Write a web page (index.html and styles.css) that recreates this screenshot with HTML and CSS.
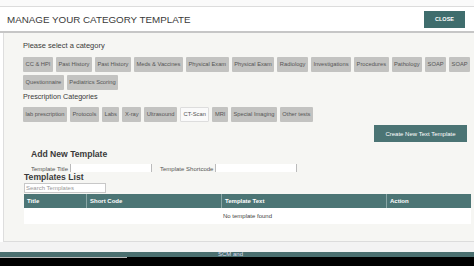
FILE: index.html
```html
<!DOCTYPE html>
<html lang="en">

<head>
    <meta charset="UTF-8">
    <meta name="viewport" content="width=device-width, initial-scale=1.0">
    <title>Manage Your Category Template</title>
    <link rel="stylesheet" href="styles.css">
</head>

<body>
    <div class="topbar"></div>

    <div class="modal-header">
        <h1>MANAGE YOUR CATEGORY TEMPLATE</h1>
        <button class="close-btn">CLOSE</button>
    </div>

    <div class="modal-body">
        <p class="label">Please select a category</p>
        <div class="chips">
            <span class="chip">CC &amp; HPI</span>
            <span class="chip">Past History</span>
            <span class="chip">Past History</span>
            <span class="chip">Meds &amp; Vaccines</span>
            <span class="chip">Physical Exam</span>
            <span class="chip">Physical Exam</span>
            <span class="chip">Radiology</span>
            <span class="chip">Investigations</span>
            <span class="chip">Procedures</span>
            <span class="chip">Pathology</span>
            <span class="chip">SOAP</span>
            <span class="chip">SOAP</span>
            <span class="chip">Questionnaire</span>
            <span class="chip">Pediatrics Scoring</span>
        </div>

        <p class="label small">Prescription Categories</p>
        <div class="chips">
            <span class="chip">lab prescription</span>
            <span class="chip">Protocols</span>
            <span class="chip">Labs</span>
            <span class="chip">X-ray</span>
            <span class="chip">Ultrasound</span>
            <span class="chip active">CT-Scan</span>
            <span class="chip">MRI</span>
            <span class="chip">Special Imaging</span>
            <span class="chip">Other tests</span>
        </div>

        <div class="actions">
            <button class="create-btn">Create New Text Template</button>
        </div>

        <h2 class="add-title">Add New Template</h2>
        <div class="form-row">
            <label>Template Title</label>
            <input type="text" class="field">
            <label class="second">Template Shortcode</label>
            <input type="text" class="field">
        </div>

        <h2 class="list-title">Templates List</h2>
        <input type="text" class="search" placeholder="Search Templates">

        <table class="templates">
            <thead>
                <tr>
                    <th class="col-title">Title</th>
                    <th class="col-code">Short Code</th>
                    <th class="col-text">Template Text</th>
                    <th>Action</th>
                </tr>
            </thead>
            <tbody>
                <tr>
                    <td colspan="4">No template found</td>
                </tr>
            </tbody>
        </table>
    </div>

    <div class="gap"></div>
    <footer>
        <span>SCM and</span>
    </footer>
    <div class="player">
        <div class="progress"></div>
    </div>
</body>

</html>
```

FILE: styles.css
```css
body {
    font-family: "Liberation Sans", Arial, sans-serif;
    color: #333;
    background: #fff;
    margin: 0;
    width: 474px;
    height: 266px;
    overflow: hidden;
}

.topbar {
    height: 6px;
    background: #fafafa;
    border-bottom: 1px solid #dcdcdc;
}

.modal-header {
    display: flex;
    justify-content: space-between;
    align-items: center;
    height: 24px;
    padding: 0 9px 0 7px;
    background: #fff;
    border-bottom: 2px solid #c6c6c6;
}

h1 {
    margin: 0;
    font-size: 9.8px;
    font-weight: normal;
    color: #3a3a3a;
}

.close-btn {
    width: 41px;
    height: 17px;
    background: #3f6d6d;
    color: #fff;
    border: none;
    font-family: inherit;
    font-size: 5.5px;
    font-weight: bold;
    padding: 0;
}

.modal-body {
    height: 200px;
    margin-left: 3px;
    padding: 8px 1px 0 19px;
    background: #f6f6f3;
    border-left: 1px solid #dedede;
    border-bottom: 1px solid #dcdcdc;
}

.label {
    margin: 0 0 6px;
    font-size: 7.5px;
    line-height: 10px;
    color: #3a3a3a;
}

.label.small {
    font-size: 7.2px;
    margin-bottom: 5px;
}

.chips {
    display: flex;
    flex-wrap: wrap;
    gap: 3px;
    margin-bottom: 2px;
}

.chip {
    height: 15px;
    line-height: 15px;
    padding: 0 2.5px;
    background: #c3c3c1;
    color: #555;
    font-size: 5.75px;
    border-radius: 1px;
}

.chip.active {
    background: #fafafa;
    border: 1px solid #ddd;
    height: 13px;
    line-height: 13px;
}

.actions {
    display: flex;
    justify-content: flex-end;
    padding: 1px 6px 0 0;
}

.create-btn {
    width: 93px;
    height: 17px;
    background: #4b7474;
    color: #fff;
    border: none;
    font-family: inherit;
    font-size: 6px;
    padding: 0;
}

.add-title {
    margin: 6px 0 0 8px;
    font-size: 8.6px;
    line-height: 12px;
    color: #3a3a3a;
}

.form-row {
    display: flex;
    align-items: flex-end;
    height: 8px;
    margin: 4px 0 0 8px;
    overflow: hidden;
}

.form-row label {
    font-size: 6px;
    color: #555;
}

.form-row label.second {
    margin-left: 8px;
}

.field {
    width: 80px;
    height: 10px;
    margin: 0 0 -3px 2px;
    padding: 0;
    border: 1px solid #bbb;
    background: #fff;
}

.list-title {
    margin: 0 0 0 1px;
    font-size: 8.6px;
    line-height: 11px;
    color: #3a3a3a;
}

.search {
    display: block;
    box-sizing: border-box;
    width: 82px;
    height: 10px;
    margin: 0 0 1px 1px;
    padding: 0 1px;
    border: 1px solid #c8c8c8;
    background: #fff;
    font-family: inherit;
    font-size: 6px;
}

.search::placeholder {
    color: #999;
}

.templates {
    width: 447px;
    margin-left: 1px;
    border-collapse: collapse;
    font-size: 6px;
}

.templates th {
    height: 14px;
    padding: 0 3px;
    background: #4c7575;
    color: #fff;
    text-align: left;
    border-left: 1px solid #8aa6a6;
}

.templates th:first-child {
    border-left: none;
}

.col-title {
    width: 56px;
}

.col-code {
    width: 128px;
}

.col-text {
    width: 158px;
}

.templates td {
    height: 14px;
    background: #fff;
    text-align: center;
    color: #444;
}

.gap {
    height: 10px;
    background: #f3f3f3;
}

footer {
    height: 5px;
    background: #4a6f6f;
    color: #dde;
    font-size: 6px;
    line-height: 5px;
    overflow: hidden;
    padding-left: 218px;
}

.player {
    height: 9px;
    background: #000;
}

.progress {
    width: 127px;
    height: 1px;
    background: #bbb;
}
```
